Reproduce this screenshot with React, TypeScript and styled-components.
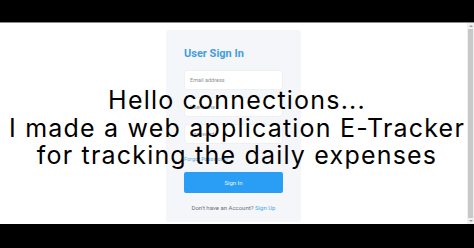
import styled, { createGlobalStyle } from "styled-components";

const GlobalStyle = createGlobalStyle`
  html, body {
    margin: 0;
    padding: 0;
    width: 474px;
    height: 248px;
    overflow: hidden;
    background: #000;
  }
  * {
    box-sizing: border-box;
  }
`;

const Frame = styled.div`
  width: 474px;
  height: 248px;
  display: flex;
  flex-direction: column;
  position: relative;
  background: #000;
`;

const BlackBar = styled.div<{ $h: number }>`
  height: ${(p) => p.$h}px;
  background: #000;
  flex-shrink: 0;
`;

const Screen = styled.div`
  flex: 1;
  display: flex;
  background: #fff;
  border-top: 1px solid #8a8a8a;
`;

const Page = styled.div`
  flex: 1;
  display: flex;
  justify-content: center;
  padding-top: 7px;
`;

const Scrollbar = styled.div`
  width: 7px;
  background: #f0f0f0;
  display: flex;
  flex-direction: column;
  align-items: center;
  padding: 2px 0;
  gap: 2px;
`;

const Arrow = styled.div<{ $down?: boolean }>`
  width: 0;
  height: 0;
  border-left: 2px solid transparent;
  border-right: 2px solid transparent;
  ${(p) =>
    p.$down ? "border-top: 2px solid #a0a0a0;" : "border-bottom: 2px solid #a0a0a0;"}
`;

const Thumb = styled.div`
  flex: 1;
  width: 5px;
  background: #c8c8c8;
`;

const Card = styled.div`
  width: 135px;
  height: 192px;
  background: #f5f6fa;
  border-radius: 3px;
  padding: 17px 18px 0;
  display: flex;
  flex-direction: column;
  font-family: Roboto, "Liberation Sans", sans-serif;
`;

const Title = styled.div`
  color: #3f9ee0;
  font-size: 11px;
  font-weight: 700;
  line-height: 14px;
  margin-bottom: 9px;
`;

const Field = styled.div`
  height: 20px;
  background: #fff;
  border-radius: 3px;
  border: 1px solid #eef0f4;
  color: #8d9096;
  font-size: 5.5px;
  display: flex;
  align-items: center;
  padding-left: 5px;
  margin-bottom: 7px;
`;

const Forgot = styled.div`
  color: #5aa8e0;
  font-size: 5.5px;
  margin: 5px 0 10px;
`;

const Button = styled.div`
  height: 21px;
  background: #2a9df4;
  border-radius: 2px;
  color: #e8f4fe;
  font-size: 6px;
  display: flex;
  align-items: center;
  justify-content: center;
`;

const Footer = styled.div`
  margin-top: 11px;
  text-align: center;
  font-size: 6px;
  color: #6b6f76;
`;

const SignUp = styled.span`
  color: #4aa6e6;
`;

const Caption = styled.div`
  position: absolute;
  left: 0;
  right: 0;
  top: 87px;
  text-align: center;
  font-family: Inter, "Liberation Sans", sans-serif;
  font-size: 25px;
  line-height: 27.5px;
  color: #000;
  letter-spacing: 1.2px;
`;

export default function App() {
  return (
    <>
      <GlobalStyle />
      <Frame>
        <BlackBar $h={22} />
        <Screen>
          <Page>
            <Card>
              <Title>User Sign In</Title>
              <Field>Email address</Field>
              <Field>Username</Field>
              <Field>Password</Field>
              <Forgot>Forgot Password?</Forgot>
              <Button>Sign In</Button>
              <Footer>
                Don't have an Account? <SignUp>Sign Up</SignUp>
              </Footer>
            </Card>
          </Page>
          <Scrollbar>
            <Arrow />
            <Thumb />
            <Arrow $down />
          </Scrollbar>
        </Screen>
        <BlackBar $h={24} />
        <Caption>
          Hello connections...
          <br />
          I made a web application E-Tracker
          <br />
          for tracking the daily expenses
        </Caption>
      </Frame>
    </>
  );
}
